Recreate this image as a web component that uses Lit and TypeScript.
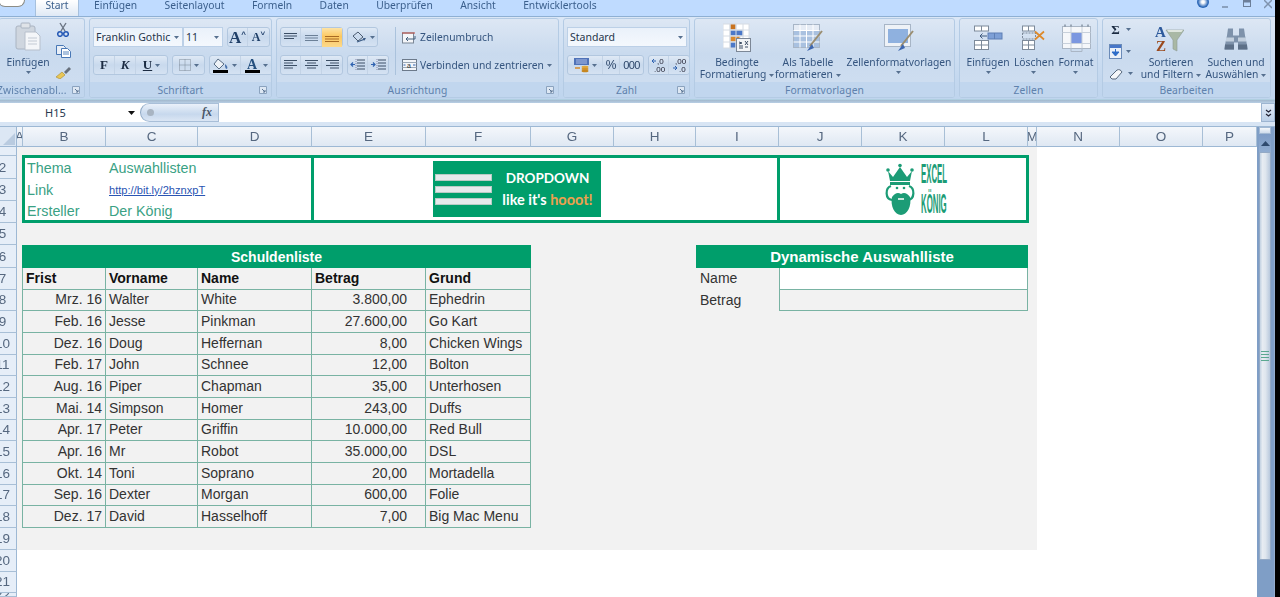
import { LitElement, html, css, svg } from "lit";
import { customElement } from "lit/decorators.js";

const ic = (w: number, h: number, body: unknown) =>
  html`<svg class="ic" width=${w} height=${h} viewBox="0 0 ${w} ${h}">${body}</svg>`;
const caret = html`<svg class="caret" width="5" height="3" viewBox="0 0 5 3"><path d="M0 0h5L2.5 3z" fill="#56708f"/></svg>`;
const D = "#3c4f66", B = "#2f62b0";
const lines = (x: number, y: number, ws: number[], c = D, gap = 2.5) =>
  ws.map((w, i) => svg`<rect x=${x} y=${y + i * gap} width=${w} height="1" fill=${c}/>`);

const icons = {
  paste: ic(26, 30, svg`<rect x="1" y="4" width="19" height="23" rx="2" fill="#cfd6df" stroke="#aab4c2"/><rect x="6" y="1" width="9" height="5" rx="1" fill="#dfe3e8" stroke="#aab4c2"/><path d="M10 10h11l4 4v14H10z" fill="#f4f6f9" stroke="#b7c0cc"/><path d="M13 16h9M13 19h9M13 22h9" stroke="#c3cad4"/>`),
  cut: ic(12, 15, svg`<path d="M3 1l5 8M9 1L4 9" stroke="#6b7583" stroke-width="1.4"/><circle cx="3" cy="12" r="2.3" fill="none" stroke="#2458b4" stroke-width="1.5"/><circle cx="9" cy="12" r="2.3" fill="none" stroke="#2458b4" stroke-width="1.5"/>`),
  copy: ic(15, 13, svg`<path d="M.5.5h7l2 2v7h-9z" fill="#e8eef6" stroke="#4877b5"/><path d="M5.5 3.5h6l3 3v6h-9z" fill="#fff" stroke="#4877b5"/><path d="M7 7h6M7 9h6" stroke="#5b86bd"/>`),
  brush: ic(15, 13, svg`<path d="M0 11l6-5 3 3-5 4z" fill="#e9c757" stroke="#a98a2d" stroke-width=".6"/><path d="M8 6l5-5 2 2-5 5z" fill="#67707c"/>`),
  fill: ic(16, 15, svg`<path d="M5 1l6 5-5 5-5-5z" fill="#eef2f7" stroke="#596d85"/><path d="M12 6c2 2 3 3 2 5-2 0-2-3-2-5z" fill="#4b74ae"/><rect x="0" y="12" width="15" height="3.5" fill="#000"/>`),
  fontc: ic(15, 15, svg`<text x="2" y="11" font-family="Liberation Serif" font-size="14" font-weight="700" fill="#25507f">A</text><rect x="0" y="12" width="15" height="3.5" fill="#000"/>`),
  borders: ic(12, 12, svg`<path d="M.5.5h11v11H.5zM6 .5v11M.5 6h11" fill="none" stroke="#7e8a99" stroke-dasharray="1 1"/>`),
  top: ic(13, 10, lines(0, 1, [13, 13, 10])),
  mid: ic(13, 10, lines(0, 3, [13, 13, 13], "#6c8097")),
  bot: ic(14, 11, lines(0, 4, [14, 14, 14], "#a86a24", 2.5)),
  orient: ic(16, 13, svg`<path d="M2 5l5-4 5 5-5 4z" fill="none" stroke="#4a5b70"/><path d="M6 11l8-3" stroke="#3a5a85" stroke-width="1.3"/><path d="M15 7l-3 0 1 3z" fill="#3a5a85"/>`),
  left: ic(13, 10, lines(0, 0, [13, 9, 13, 9])),
  center: ic(13, 10, [0, 1, 2, 3].map((i) => svg`<rect x=${i % 2 ? 2 : 0} y=${i * 2.5} width=${i % 2 ? 9 : 13} height="1" fill=${D}/>`)),
  right: ic(13, 10, [0, 1, 2, 3].map((i) => svg`<rect x=${i % 2 ? 4 : 0} y=${i * 2.5} width=${i % 2 ? 9 : 13} height="1" fill=${D}/>`)),
  outd: ic(15, 12, svg`<path d="M7 1h8M7 4h8M7 7h8M7 10h8" stroke=${D}/><path d="M5 5.5H1m2-2l-2 2 2 2" fill="none" stroke=${B} stroke-width="1.2"/><path d="M6 0v12" stroke="#88a" stroke-dasharray="1 1"/>`),
  ind: ic(15, 12, svg`<path d="M7 1h8M7 4h8M7 7h8M7 10h8" stroke=${D}/><path d="M0 5.5h4m-2-2l2 2-2 2" fill="none" stroke=${B} stroke-width="1.2"/><path d="M6 0v12" stroke="#88a" stroke-dasharray="1 1"/>`),
  wrap: ic(15, 14, svg`<rect x=".5" y="3" width="11" height="10" fill="#f4f6f9" stroke="#7b8796"/><path d="M0 3h13" stroke="#c0463c"/><path d="M4 9h9V6" fill="none" stroke="#44607f"/><path d="M6 7L4 9l2 2" fill="none" stroke="#44607f"/>`),
  merge: ic(15, 12, svg`<rect x=".5" y=".5" width="14" height="11" fill="#f2f5f9" stroke="#6c7a8b"/><path d="M.5 3.5h14M.5 8.5h14" stroke="#9aa7b5"/><text x="5" y="8.5" font-size="7" font-family="Liberation Sans" fill="#333">a</text><path d="M1.5 6h2M11 6h2.5" stroke=${B}/>`),
  curr: ic(15, 15, svg`<rect x="0" y="0" width="15" height="7" fill="#4f72b8"/><rect x="2" y="1" width="11" height="5" fill="#7d97cf"/><ellipse cx="11" cy="9" rx="3.5" ry="1.3" fill="#e0a83e"/><ellipse cx="11" cy="11" rx="3.5" ry="1.3" fill="#d4942c"/><ellipse cx="11" cy="13" rx="3.5" ry="1.3" fill="#c6861f"/><path d="M1 10h5" stroke="#d58a2c" stroke-width="1.5"/>`),
  cond: ic(28, 28, svg`<g stroke="#d6dce4"><rect x="0" y="0" width="26" height="24" fill="#fff"/><rect x="7" y="0" width="6" height="6" fill="#c9731f"/><rect x="7" y="6" width="13" height="6" fill="#4b78c8"/><rect x="7" y="12" width="10" height="6" fill="#d9892f"/><rect x="7" y="18" width="6" height="6" fill="#4b78c8"/><path d="M7 0v24M13 0v24M20 0v24M0 6h26M0 12h26M0 18h26" fill="none"/></g><rect x="13.5" y="14.5" width="14" height="13" fill="#f2f4f7" stroke="#7c8796"/><path d="M16 18l3 1-3 1M16 22h4M16 24h4M22 17l3 4M25 17l-3 4M22 23h3" stroke="#3e4f66" fill="none"/>`),
  table: ic(30, 28, svg`<rect x=".5" y=".5" width="26" height="23" fill="#e6ecf5" stroke="#a7b5c6"/><rect x="1" y="7" width="25" height="16" fill="#a9c1e0"/><path d="M7 .5v23M13.5 .5v23M20 .5v23M.5 6.5h26M.5 12h26M.5 18h26" stroke="#fff"/><path d="M29 7L17 22" stroke="#9a8d70" stroke-width="2"/><path d="M19 20l-5 7 7-3z" fill="#3e67b0"/>`),
  cstyle: ic(30, 28, svg`<rect x=".5" y=".5" width="26" height="22" fill="#eef2f7" stroke="#a7b5c6"/><rect x="4" y="5" width="20" height="14" fill="#8fb1df"/><path d="M29 7L17 22" stroke="#9a8d70" stroke-width="2"/><path d="M19 20l-5 7 7-3z" fill="#3e67b0"/>`),
  cins: ic(29, 25, svg`<g fill="#fff" stroke="#7d8a9a"><rect x=".5" y=".5" width="14" height="5"/><rect x=".5" y="15" width="14" height="9"/></g><path d="M7.5 .5v5M7.5 15v9M.5 19.5h14" stroke="#7d8a9a"/><rect x="14" y="7.5" width="14" height="6" fill="#7d9fd6" stroke="#5e7fb5"/><path d="M20.5 7.5v6" stroke="#5e7fb5"/><path d="M13 10.5H6m2.5-2.5L6 10.5 8.5 13" stroke="#3f5a7f" fill="none"/>`),
  cdel: ic(24, 25, svg`<g fill="#fff" stroke="#7d8a9a"><rect x=".5" y=".5" width="12" height="5"/><rect x=".5" y="15" width="12" height="9"/></g><rect x=".5" y="7.5" width="13" height="6" fill="none" stroke="#7d8a9a" stroke-dasharray="2 1"/><path d="M6.5 .5v5M6.5 15v9M.5 19.5h12" stroke="#7d8a9a"/><path d="M13 6l9 8M22 6l-9 8" stroke="#dd8a2c" stroke-width="1.7"/>`),
  cfmt: ic(29, 27, svg`<rect x=".5" y="2" width="28" height="22" fill="#f5f7fa" stroke="#aab6c5"/><rect x="9" y="8" width="11" height="11" fill="#7b97e0"/><path d="M9 2v22M20 2v22M.5 8h28M.5 19h28" stroke="#c7d0db"/><path d="M3 0v2M9 0v2M20 0v2M26 0v2" stroke="#5a6878"/><path d="M9 24v3h11v-3" fill="none" stroke="#aab6c5"/>`),
  sigma: html`<span class="sigma">Σ</span>`,
  filld: ic(13, 15, svg`<rect x=".5" y=".5" width="12" height="14" fill="#eaf0f8" stroke="#6b8bb8"/><rect x="1" y="1" width="11" height="3" fill="#4877c8"/><path d="M6.5 5v5M3 8l3.5 4L10 8z" fill="#2d6cc8" stroke="#2d6cc8"/>`),
  eraser: ic(15, 12, svg`<path d="M1 9l7-7c2-1 4 0 5 2l-6 7H3z" fill="#f4f6f9" stroke="#56677c"/>`),
  sort: ic(29, 28, svg`<path d="M11 6h18l-7 10v11l-4-2v-9z" fill="#a9b8a5" stroke="#8d9c94" stroke-width=".6"/><path d="M12 6h16l-1.5 2H13.5z" fill="#dfe6df"/><text x="0" y="13" font-size="15" font-weight="700" font-family="Liberation Serif" fill="#2e5a9c">A</text><text x="1" y="27" font-size="15" font-weight="700" font-family="Liberation Serif" fill="#9a4a1e">Z</text>`),
  find: ic(26, 25, svg`<path d="M5 3h5v7h6V3h5l1 7 3 14H15v-7h-4v7H1l3-14z" fill="#7e92ab"/><rect x="3" y="12" width="8" height="4" fill="#c2cfde"/><rect x="15" y="12" width="8" height="4" fill="#c2cfde"/><rect x="2" y="19" width="9" height="5" fill="#5d7088"/><rect x="15" y="19" width="9" height="5" fill="#5d7088"/>`),
  launcher: html`<svg class="launch" width="8" height="8" viewBox="0 0 8 8"><path d="M.5.5h7v7h-7z" fill="#dde7f3" stroke="#8ba3bf"/><path d="M3 3l3 3M6 4v2H4" stroke="#5a7494" fill="none"/></svg>`,
};

const COLS = ["A", "B", "C", "D", "E", "F", "G", "H", "I", "J", "K", "L", "M", "N", "O", "P"];
const ROWS = [2, 3, 4, 5, 6, 7, 8, 9, 10, 11, 12, 13, 14, 15, 16, 17, 18, 19, 20, 21, 22];
const DATA = [
  ["Mrz. 16", "Walter", "White", "3.800,00", "Ephedrin"],
  ["Feb. 16", "Jesse", "Pinkman", "27.600,00", "Go Kart"],
  ["Dez. 16", "Doug", "Heffernan", "8,00", "Chicken Wings"],
  ["Feb. 17", "John", "Schnee", "12,00", "Bolton"],
  ["Aug. 16", "Piper", "Chapman", "35,00", "Unterhosen"],
  ["Mai. 14", "Simpson", "Homer", "243,00", "Duffs"],
  ["Apr. 17", "Peter", "Griffin", "10.000,00", "Red Bull"],
  ["Apr. 16", "Mr", "Robot", "35.000,00", "DSL"],
  ["Okt. 14", "Toni", "Soprano", "20,00", "Mortadella"],
  ["Sep. 16", "Dexter", "Morgan", "600,00", "Folie"],
  ["Dez. 17", "David", "Hasselhoff", "7,00", "Big Mac Menu"],
];
const TABS = ["Einfügen", "Seitenlayout", "Formeln", "Daten", "Überprüfen", "Ansicht", "Entwicklertools"];

@customElement("app-root")
export class AppRoot extends LitElement {
  static styles = css`
    :host { display: block; width: 1280px; height: 597px; overflow: hidden; background: #fff; font-family: "Noto Sans", "Liberation Sans", sans-serif; }
    * { box-sizing: border-box; }
    svg { display: block; flex: none; }
    .root { display: flex; height: 597px; }
    .main { width: 1275px; display: flex; flex-direction: column; filter: blur(.3px); }
    .edge { width: 5px; background: #000; }

    .tabs { height: 16px; background: #bfdbff; display: flex; align-items: center; font-size: 10.3px; color: #3b5f8c; padding-right: 3px; }
    .orb { width: 27px; height: 7px; align-self: flex-start; background: #fff; border: 1px solid #8d8d86; border-top: 0; border-radius: 0 0 14px 14px; margin-right: 10px; flex: none; margin-left: -2px; }
    .tab { height: 16px; line-height: 11px; background: linear-gradient(#fff, #dfe9f5); border: 1px solid #a6c0dd; border-top: 0; border-bottom: 0; margin-right: 15px; width: 44px; text-align: center; flex: none; }
    .tablist { display: flex; gap: 27.4px; line-height: 11px; align-self: flex-start; }
    .winbtns { margin-left: auto; display: flex; gap: 13.3px; align-items: center; align-self: flex-start; height: 9px; }
    .help { width: 12px; height: 12px; border-radius: 50%; background: radial-gradient(#fff 15%, #2c68b8 60%); margin-top: -6px; flex: none; }

    .ribbon { height: 84px; background: linear-gradient(#dbe7f6, #c4d8ef 75%, #bfd5ee); display: flex; gap: 4px; padding: 1px 3px 1px 0; border-top: 1px solid #8fb0d3; border-bottom: 1px solid #b0cfe0; color: #35557f; font-size: 10.3px; }
    .grp { display: flex; flex-direction: column; border: 1px solid #b4cbe4; border-radius: 3px; background: linear-gradient(#dde7f4, #c9daee 45%, #d0dff1); flex: none; overflow: hidden; }
    .g1 { width: 86px; margin-left: -1px; border-left: 0; } .g2 { width: 183px; } .g3 { width: 283px; } .g4 { width: 127px; } .g5 { width: 261px; } .g6 { width: 139px; } .g7 { width: 169px; }
    .body { flex: 1; display: flex; min-height: 0; }
    .lbl { height: 15px; background: #c1d6ee; color: #5e81ac; text-align: center; line-height: 17px; position: relative; white-space: nowrap; letter-spacing: .1px; flex: none; }
    .lbl.clipL { text-align: left; text-indent: -2px; }
    .launch { position: absolute; right: 4px; top: 4px; }

    .stack { display: flex; flex-direction: column; gap: 8px; padding: 8px 3px 0; }
    .row { display: flex; gap: 4px; height: 20px; align-items: stretch; }
    .combo { background: linear-gradient(#eaf1fa, #f4f8fd); border: 1px solid #bcd0e7; display: flex; align-items: center; padding: 0 3px 0 2px; justify-content: space-between; color: #24344a; font-size: 10.5px; white-space: nowrap; }
    .cfont { width: 90px; } .csize { width: 40px; margin-left: -4px; } .cnum { width: 120px; }
    .btns { display: flex; border: 1px solid #b2c7df; border-radius: 3px; background: linear-gradient(#dfe9f5, #c8d9ed 50%, #d5e2f2); align-items: center; }
    .btn { display: flex; align-items: center; justify-content: center; height: 100%; gap: 3px; border-right: 1px solid #c3d3e6; }
    .btn:last-child { border-right: 0; }
    .w17 { width: 17px; } .w19 { width: 21px; } .w20 { width: 20px; } .w29 { width: 29px; } .w31 { width: 31px; } .w22 { width: 21px; } .w24 { width: 23px; } .w36 { width: 35px; }
    .on { background: linear-gradient(#fde3a5, #fcc860 45%, #fdd98b); height: 19px; }
    .bigA { font-family: "Liberation Serif", serif; font-weight: 700; color: #1f3f68; line-height: 1; }
    .sA { font-size: 17px; } .tA { font-size: 12px; }
    .fb { font-family: "Liberation Serif", serif; font-weight: 700; font-size: 13px; color: #1b2b42; }
    .fi { font-style: italic; } .fu { text-decoration: underline; }
    .pct { font-size: 12px; color: #2b4568; font-family: "Liberation Sans", sans-serif; }
    .nnn { font-size: 11px; letter-spacing: -.6px; color: #2b4568; font-family: "Liberation Sans", sans-serif; }
    .tri { font-size: 8px; line-height: 8px; text-align: center; color: #2c4a73; font-family: "Liberation Sans", sans-serif; font-weight: 700; align-self: flex-start; margin: 2px 0 0 -3px; }
    .sep { width: 1px; background: #aac2dc; margin: 8px 6px 8px 3px; height: 48px; flex: none; }
    .textrow { display: flex; gap: 3px; align-items: center; height: 20px; white-space: nowrap; }
    .stack2 { display: flex; flex-direction: column; gap: 8px; padding-top: 8px; }

    .big { display: flex; flex-direction: column; align-items: center; flex: none; text-align: center; line-height: 12px; white-space: nowrap; padding-top: 4px; }
    .big .ic { height: 30px; }
    .big .t { margin-top: 3px; display: flex; flex-direction: column; align-items: center; }
    .big .caret { margin: 3px auto 0; }
    .inl { display: inline-flex; align-items: center; gap: 3px; }
    .b-paste { width: 58px; padding-top: 3px; }
    .b-paste .t { margin-top: 4px; }
    .clip { display: flex; flex-direction: column; gap: 8px; padding: 3px 0 0 0; align-items: center; width: 18px; margin-left: -3px; }
    .fv1 { width: 74px; margin-left: 5px; } .fv2 { width: 70px; margin-left: -1px; } .fv3 { width: 110px; margin-left: 1px; }
    .z1 { width: 48px; margin-left: 4px; } .z2 { width: 44px; } .z3 { width: 40px; }
    .sm { display: flex; flex-direction: column; padding: 3px 0 0 6px; gap: 7px; width: 38px; }
    .sm > div { display: flex; gap: 4px; align-items: center; height: 15px; }
    .sigma { font-family: "Liberation Serif", serif; font-weight: 700; font-size: 13px; color: #1b2b42; width: 13px; text-align: center; line-height: 15px; }
    .s1 { width: 62px; } .s2 { width: 68px; }
    .s1 .ic { margin-right: 4px; }

    .gap1 { height: 3px; background: linear-gradient(#a2b8cd, #b8cee4); }
    .fbar { height: 19px; display: flex; background: #fff; font-size: 11px; color: #28394f; }
    .name { width: 140px; display: flex; align-items: center; padding: 0 5px 0 45px; justify-content: space-between; }
    .name .caret { width: 7px; height: 4px; margin: 0; }
    .fx { width: 79px; border-radius: 10px 0 0 10px; background: linear-gradient(#eaf1fa, #c7d8ed 60%, #dbe6f4); border: 1px solid #a9bfd8; border-left-color: #8ea8c5; display: flex; align-items: center; justify-content: space-between; padding: 0 6px; }
    .dot { width: 7px; height: 7px; border-radius: 50%; background: #a8b4c2; }
    .fxt { font-family: "Liberation Serif", serif; font-style: italic; font-weight: 700; font-size: 12px; color: #4a5668; }
    .finput { flex: 1; }
    .fexp { width: 14px; background: linear-gradient(#e4edf8, #bcd0e8); border: 1px solid #9db5d1; display: flex; align-items: center; justify-content: center; }
    .gap2 { height: 5px; background: #d8e5f4; border-bottom: 1px solid #9db8d4; }

    .wb { flex: 1; display: flex; min-height: 0; }
    .sheet { width: 1257px; display: grid; font-family: "Liberation Sans", sans-serif; font-size: 14px; color: #333;
      grid-template-columns: 17px 6px 83px 92px 114px 114px 105px 83px 82px 83px 83px 83px 83px 9px 83px 83px 54px;
      grid-template-rows: 20px 9px 23px 22px 22px 22px 23px repeat(12, 21.67px) 22px 21.67px 21.67px 1fr;
      overflow: hidden; }
    .corner { background: #dce7f4; border-right: 1px solid #9db8d4; border-bottom: 1px solid #9db8d4; position: relative; }
    .corner::after { content: ""; position: absolute; right: 1px; bottom: 1px; border: 6px solid transparent; border-right-color: #b9cbe0; border-bottom-color: #b9cbe0; }
    .ch { background: linear-gradient(#f4f7fb, #dfe8f3); border-right: 1px solid #a8bfd6; border-bottom: 1px solid #9db8d4; display: flex; align-items: center; justify-content: center; color: #55677f; font-size: 13.5px; overflow: hidden; }
    .rh { background: #e6eef8; border-right: 1px solid #9db8d4; border-bottom: 1px solid #a8bfd6; display: flex; justify-content: center; align-items: center; padding-right: 11px; overflow: hidden; color: #55677f; font-size: 13.5px; }
    .grey { background: #f2f2f2; }
    .box { border: 3px solid #009e6b; background: #fff; margin-top: -1px; display: flex; align-items: center; }
    .b1 { margin-left: -1px; display: grid; grid-template-columns: 82px 1fr; padding: 0 0 0 2px; color: #3aa184; font-size: 14.3px; margin-right: -2px; grid-auto-rows: 21.5px; align-content: start; }
    .b1 > span { display: flex; align-items: center; white-space: nowrap; padding-bottom: 1px; }
    .b2, .b3 { border-left: 0; }
    .b2 { padding-left: 119px; margin-left: 2px; margin-right: -1px; }
    .b3 { justify-content: center; padding-left: 27px; margin-left: 1px; margin-right: -1px; }
    .link { color: #2a55b3; text-decoration: underline; font-size: 11.1px; }
    .banner { width: 168px; height: 56px; background: #009e6b; display: flex; align-items: center; padding: 0 7px 0 2px; gap: 9px; color: #fff; font-weight: 700; flex: none; }
    .fields { display: flex; flex-direction: column; gap: 5px; flex: none; }
    .fields span { display: block; width: 57px; height: 7px; background: #e6eaec; border: 1px solid #b9cbc5; }
    .btxt { display: flex; flex-direction: column; align-items: center; line-height: 21px; font-family: "Lato", "Open Sans", sans-serif; flex: 1; white-space: nowrap; }
    .btxt .d1 { font-size: 13.5px; }
    .btxt .d2 { font-size: 14.5px; }
    .btxt em { font-style: normal; color: #eda14e; }
    .king { display: flex; align-items: center; gap: 6px; color: #1c9c76; }
    .kt { display: flex; flex-direction: column; width: 28px; font-family: "Liberation Sans", sans-serif; font-weight: 700; line-height: 30px; font-size: 27px; }
    .kt span { display: block; transform: scaleX(.29); transform-origin: left center; white-space: nowrap; }
    .title { background: #009e6b; color: #fff; font-weight: 700; display: flex; align-items: center; justify-content: center; margin-left: -1px; white-space: nowrap; }
    .t2 { font-size: 15px; margin-left: 0; }
    .c { border-right: 1px solid #79b3a3; border-bottom: 1px solid #79b3a3; display: flex; align-items: center; padding: 0 3px 1px; white-space: nowrap; }
    .c.first { border-left: 1px solid #79b3a3; margin-left: -1px; }
    .c.hd { font-weight: 700; color: #111; }
    .c.r { justify-content: flex-end; padding-right: 3px; }
    .c.m { justify-content: flex-end; padding-right: 18px; }
    .lab { display: flex; align-items: center; padding: 0 0 1px 4px; }
    .inp { border: 1px solid #79b3a3; border-top: 0; }
    .inp.w { background: #fff; }

    .sb { width: 18px; display: flex; flex-direction: column; border-left: 1px solid #7f9ec6; background: #7f9ec6; padding: 0 3px 0 1px; border-right: 1px solid #93accd; }
    .split { height: 7px; background: linear-gradient(#f5f8fb, #cfdcec); border: 1px solid #a4bad4; }
    .up { height: 18px; background: linear-gradient(#7e9cc6, #90acd0); display: flex; justify-content: center; align-items: center; }
    .thumb { height: 408px; background: linear-gradient(90deg, #c3d2e2, #e7ecf2 25%, #dfe6ee 55%, #b9c9dd); border: 1px solid #93a9c5; display: flex; flex-direction: column; align-items: center; justify-content: center; gap: 2px; }
    .thumb i { display: block; width: 8px; height: 1px; background: #5aa891; }
  `;

  private big(cls: string, icon: unknown, l1: string, l2: string | null, caretInline = false, caretBelow = false) {
    return html`<div class="big ${cls}">${icon}<div class="t"><span>${l1}</span>${l2
      ? html`<span class="inl">${l2}${caretInline ? caret : ""}</span>` : ""}${caretBelow ? caret : ""}</div></div>`;
  }

  private cell(col: number, row: number, span: number, cls: string, content: unknown, rowSpan = 1) {
    return html`<div class=${cls} style="grid-column:${col}/span ${span};grid-row:${row}/span ${rowSpan}">${content}</div>`;
  }

  render() {
    const G = "#1c9c76";
    const king = svg`
      <circle cx="3" cy="7" r="1.8" fill=${G}/><circle cx="15" cy="2.5" r="1.8" fill=${G}/><circle cx="27" cy="7" r="1.8" fill=${G}/>
      <path d="M3 8l5 6 7-10 7 10 5-6-2 10H5z" fill=${G}/>
      <rect x="5" y="19" width="20" height="3" fill=${G}/>
      <path d="M6 23C0 25 0 36 7 37M24 23c6 2 6 13-1 14" fill="none" stroke=${G} stroke-width="2.2"/>
      <circle cx="12" cy="25" r="1.3" fill=${G}/><circle cx="19" cy="25" r="1.3" fill=${G}/>
      <path d="M7 34c3-4 6-5 9-3 3-2 6-1 9 3 2 9-3 18-9 18S5 43 7 34z" fill=${G}/>
      <path d="M13 36h6" stroke="#fff" stroke-width="1.5"/>`;
    return html`<div class="root"><div class="main">
      <div class="tabs">
        <div class="orb"></div>
        <div class="tab">Start</div>
        <div class="tablist">${TABS.map((t) => html`<span>${t}</span>`)}</div>
        <div class="winbtns">
          <span class="help"></span>
          ${ic(7, 9, svg`<rect y="6" width="6" height="2" fill="#8aa0bd"/>`)}
          ${ic(8, 9, svg`<rect x=".5" y=".5" width="7" height="6" fill="none" stroke="#6c7f99"/><rect x=".5" y=".5" width="7" height="2" fill="#6c7f99"/>`)}
          ${ic(8, 9, svg`<path d="M0 0l8 8M8 0L0 8" stroke="#7f93ae" stroke-width="1.5"/>`)}
        </div>
      </div>

      <div class="ribbon">
        <div class="grp g1">
          <div class="body">
            ${this.big("b-paste", icons.paste, "Einfügen", null, false, true)}
            <div class="clip">${icons.cut}${icons.copy}${icons.brush}</div>
          </div>
          <div class="lbl clipL">Zwischenabl...${icons.launcher}</div>
        </div>

        <div class="grp g2">
          <div class="body"><div class="stack">
            <div class="row">
              <div class="combo cfont"><span>Franklin Gothic</span>${caret}</div>
              <div class="combo csize"><span>11</span>${caret}</div>
              <div class="btns"><div class="btn w20"><span class="bigA sA">A</span><span class="tri">˄</span></div><div class="btn w19"><span class="bigA tA">A</span><span class="tri">˅</span></div></div>
            </div>
            <div class="row">
              <div class="btns"><div class="btn w22"><span class="fb">F</span></div><div class="btn w22"><span class="fb fi">K</span></div><div class="btn w31"><span class="fb fu">U</span>${caret}</div></div>
              <div class="btns"><div class="btn w31">${icons.borders}${caret}</div></div>
              <div class="btns"><div class="btn w31">${icons.fill}${caret}</div><div class="btn w31">${icons.fontc}${caret}</div></div>
            </div>
          </div></div>
          <div class="lbl">Schriftart${icons.launcher}</div>
        </div>

        <div class="grp g3">
          <div class="body">
            <div class="stack">
              <div class="row">
                <div class="btns"><div class="btn w20">${icons.top}</div><div class="btn w22">${icons.mid}</div><div class="btn w20 on">${icons.bot}</div></div>
                <div class="btns"><div class="btn w29">${icons.orient}${caret}</div></div>
              </div>
              <div class="row">
                <div class="btns"><div class="btn w20">${icons.left}</div><div class="btn w22">${icons.center}</div><div class="btn w20">${icons.right}</div></div>
                <div class="btns"><div class="btn w20">${icons.outd}</div><div class="btn w20">${icons.ind}</div></div>
              </div>
            </div>
            <div class="sep"></div>
            <div class="stack2">
              <div class="textrow">${icons.wrap}<span>Zeilenumbruch</span></div>
              <div class="textrow">${icons.merge}<span>Verbinden und zentrieren</span>${caret}</div>
            </div>
          </div>
          <div class="lbl">Ausrichtung${icons.launcher}</div>
        </div>

        <div class="grp g4">
          <div class="body"><div class="stack">
            <div class="row"><div class="combo cnum"><span>Standard</span>${caret}</div></div>
            <div class="row">
              <div class="btns"><div class="btn w36">${icons.curr}${caret}</div><div class="btn w17"><span class="pct">%</span></div><div class="btn w24"><span class="nnn">000</span></div></div>
              <div class="btns">
                <div class="btn w20">${ic(15, 14, svg`<path d="M5 3H1m2-2L1 3l2 2" fill="none" stroke=${B}/><text x="6" y="6" font-size="8" font-family="Liberation Sans" fill="#223">,0</text><text x="3" y="14" font-size="8" font-family="Liberation Sans" fill="#223">,00</text>`)}</div>
                <div class="btn w20">${ic(15, 14, svg`<text x="3" y="6" font-size="8" font-family="Liberation Sans" fill="#223">,00</text><path d="M1 10h4m-2-2l2 2-2 2" fill="none" stroke=${B}/><text x="7" y="14" font-size="8" font-family="Liberation Sans" fill="#223">,0</text>`)}</div>
              </div>
            </div>
          </div></div>
          <div class="lbl">Zahl${icons.launcher}</div>
        </div>

        <div class="grp g5">
          <div class="body">
            ${this.big("fv1", icons.cond, "Bedingte", "Formatierung", true)}
            ${this.big("fv2", icons.table, "Als Tabelle", "formatieren", true)}
            ${this.big("fv3", icons.cstyle, "Zellenformatvorlagen", null, false, true)}
          </div>
          <div class="lbl">Formatvorlagen</div>
        </div>

        <div class="grp g6">
          <div class="body">
            ${this.big("z1", icons.cins, "Einfügen", null, false, true)}
            ${this.big("z2", icons.cdel, "Löschen", null, false, true)}
            ${this.big("z3", icons.cfmt, "Format", null, false, true)}
          </div>
          <div class="lbl">Zellen</div>
        </div>

        <div class="grp g7">
          <div class="body">
            <div class="sm">
              <div>${icons.sigma}${caret}</div>
              <div>${icons.filld}${caret}</div>
              <div>${icons.eraser}${caret}</div>
            </div>
            ${this.big("s1", icons.sort, "Sortieren", "und Filtern", true)}
            ${this.big("s2", icons.find, "Suchen und", "Auswählen", true)}
          </div>
          <div class="lbl">Bearbeiten</div>
        </div>
      </div>

      <div class="gap1"></div>
      <div class="fbar">
        <div class="name"><span>H15</span><svg class="caret" viewBox="0 0 7 4"><path d="M0 0h7L3.5 4z" fill="#111"/></svg></div>
        <div class="fx"><span class="dot"></span><span class="fxt">fx</span></div>
        <div class="finput"></div>
        <div class="fexp"><svg width="7" height="8" viewBox="0 0 7 8"><path d="M1 1l2.5 2L6 1M1 5l2.5 2L6 5" fill="none" stroke="#223" stroke-width="1.2"/></svg></div>
      </div>
      <div class="gap2"></div>

      <div class="wb">
        <div class="sheet">
          ${this.cell(1, 1, 1, "corner", "")}
          ${COLS.map((c, i) => this.cell(i + 2, 1, 1, "ch", c))}
          ${this.cell(1, 2, 1, "rh", "")}
          ${ROWS.map((n) => this.cell(1, n + 1, 1, "rh", html`<span>${n}</span>`))}

          ${this.cell(2, 2, 13, "grey", "", 19)}

          ${this.cell(3, 3, 3, "box b1", html`
            <span>Thema</span><span>Auswahllisten</span>
            <span>Link</span><span><a class="link">http://bit.ly/2hznxpT</a></span>
            <span>Ersteller</span><span>Der König</span>`, 3)}
          ${this.cell(6, 3, 5, "box b2", html`
            <div class="banner">
              <div class="fields"><span></span><span></span><span></span></div>
              <div class="btxt"><span class="d1">DROPDOWN</span><span class="d2">like it's <em>hooot!</em></span></div>
            </div>`, 3)}
          ${this.cell(11, 3, 3, "box b3", html`
            <div class="king">
              <svg width="30" height="53" viewBox="0 0 30 53">${king}</svg>
              <div class="kt"><span>EXCEL</span><span>KÖNIG</span></div>
            </div>`, 3)}

          ${this.cell(3, 7, 5, "title", "Schuldenliste")}
          ${["Frist", "Vorname", "Name", "Betrag", "Grund"].map((h, i) =>
            this.cell(3 + i, 8, 1, `c hd ${i === 0 ? "first" : ""}`, h))}
          ${DATA.map((r, ri) => r.map((v, ci) => this.cell(3 + ci, 9 + ri, 1,
            `c ${ci === 0 ? "first r" : ""} ${ci === 3 ? "m" : ""}`, v)))}

          ${this.cell(10, 7, 4, "title t2", "Dynamische Auswahlliste")}
          ${this.cell(10, 8, 1, "lab", "Name")}
          ${this.cell(10, 9, 1, "lab", "Betrag")}
          ${this.cell(11, 8, 3, "inp w", "")}
          ${this.cell(11, 9, 3, "inp", "")}
        </div>
        <div class="sb">
          <div class="split"></div>
          <div class="up"><svg width="9" height="5" viewBox="0 0 9 5"><path d="M0 5h9L4.5 0z" fill="#2f4a6e"/></svg></div>
          <div class="thumb"><i></i><i></i><i></i><i></i></div>
        </div>
      </div>
    </div><div class="edge"></div></div>`;
  }
}
